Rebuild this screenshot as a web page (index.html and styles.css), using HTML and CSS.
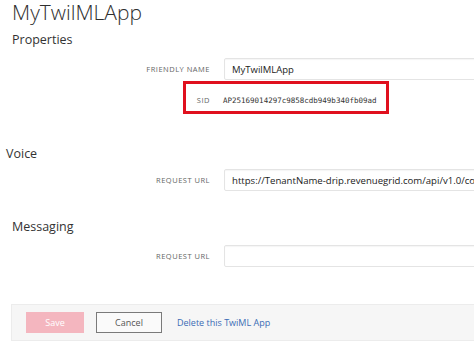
FILE: index.html
```html
<!DOCTYPE html>
<html>
<head>
<meta charset="utf-8">
<link rel="stylesheet" href="styles.css">
</head>
<body>
<div class="page">
  <h1 class="title">MyTwilMLApp</h1>
  <h2 class="section">Properties</h2>
  <div class="row">
    <span class="label">FRIENDLY NAME</span>
    <div class="input"><span class="value">MyTwilMLApp</span></div>
  </div>
  <div class="row sid-row">
    <span class="label">SID</span>
    <span class="sid">AP25169014297c9858cdb949b340fb09ad</span>
    <div class="highlight"></div>
  </div>
  <h2 class="section voice">Voice</h2>
  <div class="row">
    <span class="label">REQUEST URL</span>
    <div class="input"><span class="value url">https://TenantName-drip.revenuegrid.com/api/v1.0/com</span></div>
  </div>
  <h2 class="section messaging">Messaging</h2>
  <div class="row">
    <span class="label">REQUEST URL</span>
    <div class="input"></div>
  </div>
  <div class="footer">
    <button class="btn save">Save</button>
    <button class="btn cancel">Cancel</button>
    <a class="delete">Delete this TwiML App</a>
  </div>
</div>
</body>
</html>
```

FILE: styles.css
```css
html, body {
  margin: 0;
  padding: 0;
  background: #ffffff;
  overflow: hidden;
}
body {
  font-family: "Open Sans", "Lato", sans-serif;
  color: #333;
  width: 474px;
  height: 355px;
}
.page {
  width: 540px;
  padding: 0;
}
.title {
  margin: 0;
  padding: 0 0 0 12px;
  font-size: 21px;
  font-weight: 300;
  line-height: 28px;
  color: #2f2f2f;
  height: 28px;
  margin-top: -2px;
}
.section {
  margin: 0;
  padding-left: 12px;
  font-size: 12.5px;
  font-weight: 400;
  color: #333;
  line-height: 16px;
}
.title + .section {
  margin-top: 6px;
}
.row {
  display: flex;
  align-items: center;
  height: 22px;
  position: relative;
}
.title + .section + .row {
  margin-top: 10px;
}
.label {
  width: 210px;
  flex: none;
  text-align: right;
  font-size: 7.5px;
  letter-spacing: 0.5px;
  color: #666;
}
.input {
  margin-left: 14px;
  flex: 1;
  height: 20px;
  border: 1px solid #e4e4e4;
  border-radius: 2px;
  box-shadow: inset 0 1px 1px rgba(0,0,0,0.04);
  display: flex;
  align-items: center;
  padding-left: 7px;
  overflow: hidden;
  white-space: nowrap;
}
.value {
  font-size: 9.5px;
  color: #222;
}
.value.url {
  font-size: 9.6px;
}
.sid-row {
  margin-top: 9px;
  height: 22px;
}
.sid {
  margin-left: 13px;
  font-family: "DejaVu Sans Mono", monospace;
  font-size: 7.5px;
  color: #333;
}
.highlight {
  position: absolute;
  left: 183px;
  top: -8px;
  width: 200px;
  height: 27px;
  border: 3px solid #e0101e;
}
.voice {
  padding-left: 6px;
  margin-top: 35px;
}
.voice + .row {
  margin-top: 7px;
}
.messaging {
  margin-top: 28px;
}
.messaging + .row {
  margin-top: 10px;
}
.footer {
  margin-top: 37px;
  margin-left: 11px;
  height: 35px;
  background: #f6f6f6;
  border: 1px solid #ececec;
  display: flex;
  align-items: center;
  padding-left: 14px;
}
.btn {
  height: 21px;
  font-family: "Open Sans", sans-serif;
  font-size: 9px;
  border-radius: 0;
  padding: 0;
  margin: 0;
}
.save {
  width: 58px;
  background: #f4b6bf;
  color: #fff;
  border: none;
}
.cancel {
  margin-left: 12px;
  width: 66px;
  background: #fafafa;
  color: #555;
  border: 1px solid #7a7a7a;
}
.delete {
  margin-left: 15px;
  font-size: 9px;
  color: #3b6cb5;
}
```
